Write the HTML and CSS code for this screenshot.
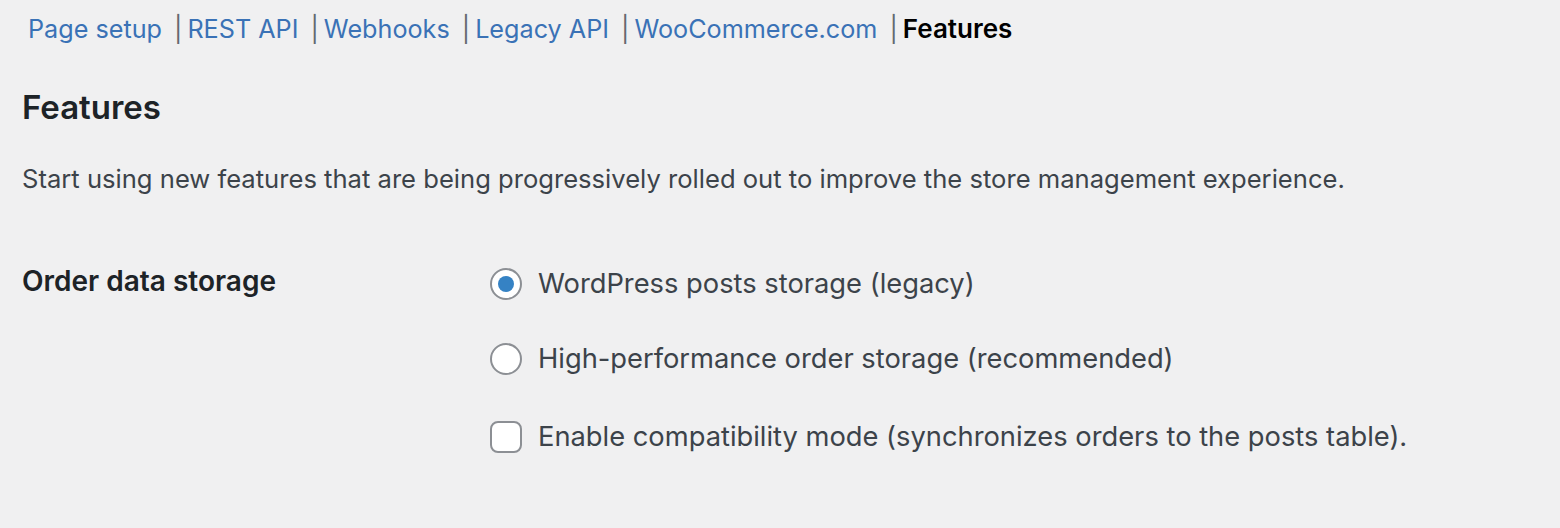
FILE: index.html
```html
<!DOCTYPE html>
<html>
<head>
    <link rel="stylesheet" href="styles.css">
</head>
<body>
    <div class="wrap">
        <ul class="subsubsub">
            <li><a href="#">Page setup</a><span class="sep">|</span></li>
            <li><a href="#">REST API</a><span class="sep">|</span></li>
            <li><a href="#">Webhooks</a><span class="sep">|</span></li>
            <li><a href="#">Legacy API</a><span class="sep">|</span></li>
            <li><a href="#">WooCommerce.com</a><span class="sep">|</span></li>
            <li><span class="current">Features</span></li>
        </ul>

        <h2>Features</h2>
        <p class="intro">Start using new features that are being progressively rolled out to improve the store management experience.</p>

        <div class="form-row">
            <div class="row-title">Order data storage</div>
            <div class="row-fields">
                <label class="option">
                    <input type="radio" name="storage" checked>
                    <span>WordPress posts storage (legacy)</span>
                </label>
                <label class="option">
                    <input type="radio" name="storage">
                    <span>High-performance order storage (recommended)</span>
                </label>
                <label class="option option-check">
                    <input type="checkbox">
                    <span>Enable compatibility mode (synchronizes orders to the posts table).</span>
                </label>
            </div>
        </div>
    </div>
</body>
</html>
```

FILE: styles.css
```css
body {
    margin: 0;
    background-color: #f0f0f1;
    font-family: Inter, "Open Sans", sans-serif;
    color: #3c434a;
}

.wrap {
    padding: 0 22px;
}

.subsubsub {
    list-style: none;
    margin: 0;
    padding: 12px 0 0 6px;
    display: flex;
    font-size: 25.2px;
    line-height: 34px;
}
.subsubsub a {
    color: #3a72b6;
    text-decoration: none;
}
.sep {
    color: #646970;
    margin: 0 5px 0 12px;
}
.current {
    color: #000;
    font-weight: 600;
    font-size: 26px;
}

h2 {
    margin: 39px 0 0;
    font-size: 33px;
    line-height: 44px;
    font-weight: 600;
    color: #1d2327;
}
.intro {
    margin: 0;
    padding-top: 30px;
    font-size: 25.6px;
    line-height: 40px;
}

.form-row {
    display: flex;
    margin-top: 68px;
}
.row-title {
    width: 468px;
    font-size: 28px;
    font-weight: 600;
    color: #1d2327;
    line-height: 28px;
}
.row-fields {
    display: flex;
    flex-direction: column;
}
.option {
    display: flex;
    align-items: center;
    font-size: 27.3px;
    line-height: 34px;
}
.option + .option {
    margin-top: 41px;
}
.option.option-check {
    margin-top: 44px;
}

input[type="radio"],
input[type="checkbox"] {
    appearance: none;
    margin: 0 16px 0 0;
    width: 32px;
    height: 32px;
    border: 2px solid #8c8f94;
    background: #fff;
    box-sizing: border-box;
    display: grid;
    place-content: center;
}
input[type="radio"] {
    border-radius: 50%;
}
input[type="radio"]:checked::before {
    content: "";
    width: 16px;
    height: 16px;
    border-radius: 50%;
    background: #3582c4;
}
input[type="checkbox"] {
    border-radius: 8px;
}
```
